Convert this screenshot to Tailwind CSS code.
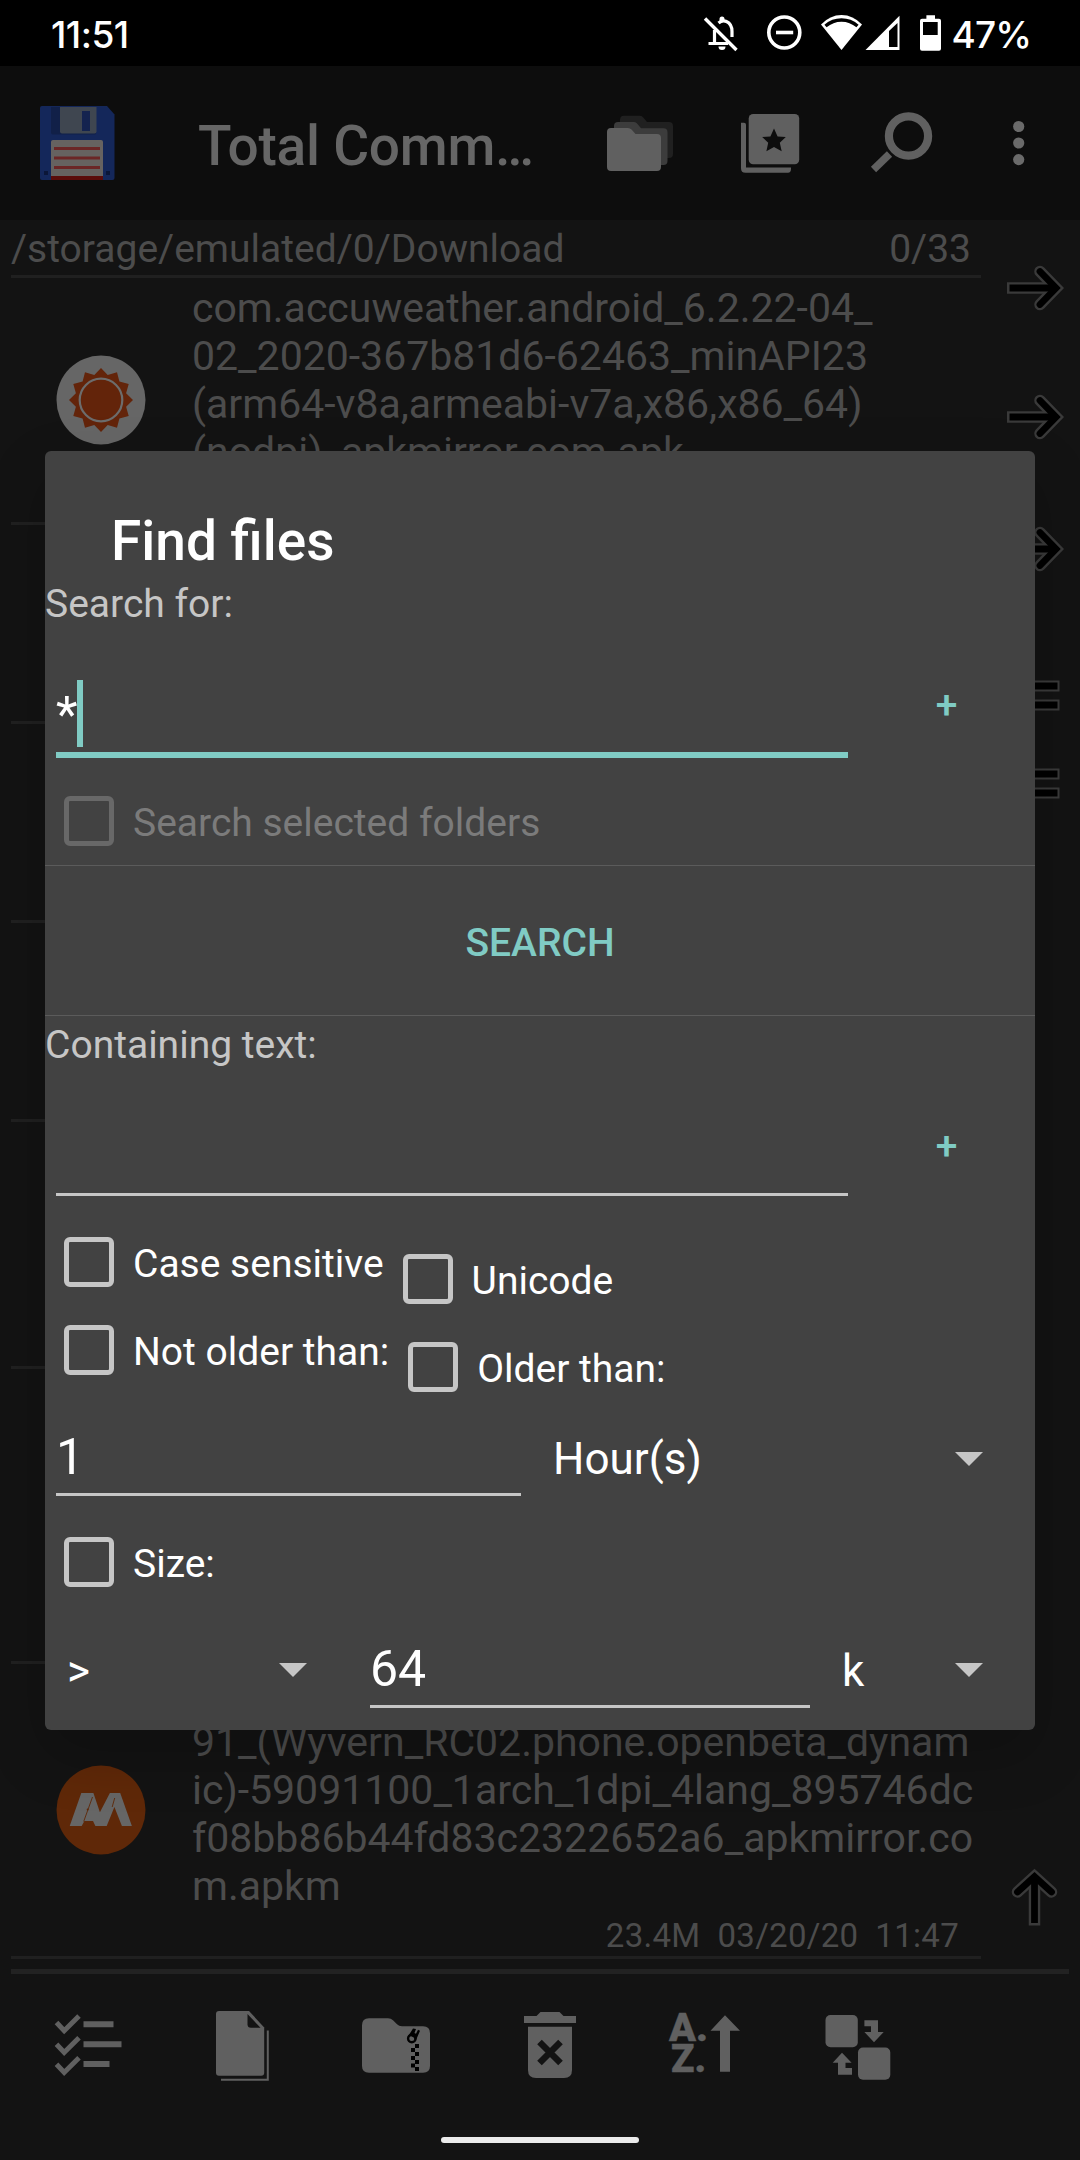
<!DOCTYPE html>
<html lang="en">
<head>
  <meta charset="UTF-8" />
  <meta name="viewport" content="width=device-width, initial-scale=1.0" />
  <title>Total Commander - Find files</title>
  <script src="https://cdn.jsdelivr.net/npm/@tailwindcss/browser@4"></script>
</head>
<body class="relative w-[1080px] h-[2160px] overflow-hidden bg-[#131313] font-['Roboto',sans-serif] text-[#4c4c4c] flex flex-col">

  <!-- Status bar -->
  <div class="h-[66px] shrink-0 bg-black text-white flex items-center pl-[51px] pr-[49px] font-['Inter','Roboto',sans-serif] font-medium text-[37px]">
    <span class="tracking-[-0.5px] pt-[3px]">11:51</span>
    <svg class="ml-auto shrink-0" width="250" height="66" viewBox="700 0 250 66" fill="none">
      <!-- bell off -->
      <path d="M714.500 43V30M718.500 23q4-3.500 8-1.500q5.500 2.500 5.500 10v5.500M708.500 43.500H728" stroke="#fff" stroke-width="3.200"/>
      <path d="M719.500 21v-2a2.500 2.500 0 0 1 5 0V21z" fill="#fff"/>
      <path d="M718.500 46.500h7a3.500 3.500 0 0 1-7 0z" fill="#fff"/>
      <path d="M705 18.500L736.500 50" stroke="#fff" stroke-width="3.400"/>
      <!-- do not disturb -->
      <circle cx="784.300" cy="32.500" r="15.500" stroke="#fff" stroke-width="3.600"/>
      <path d="M776 32.500h17.200" stroke="#fff" stroke-width="3.600"/>
      <!-- wifi -->
      <path d="M841.500 50L821 24.500Q830 15 841.500 15T862 24.500Z" fill="#fff"/>
      <path d="M825.500 26q7-6 16-6t16 6" stroke="#000" stroke-width="3.400"/>
      <!-- signal -->
      <path d="M865.500 50L899.500 15.700V50z" fill="#fff"/>
      <path d="M889 31L897.500 23V47H889z" fill="#000"/>
      <!-- battery -->
      <path d="M926.400 15.300h8.600v3.500h4q2 0 2 2v28q0 2-2 2h-17q-2 0-2-2v-28q0-2 2-2h4.400z" fill="#fff"/>
      <path d="M923 22h14.700v13H923z" fill="#000"/>
    </svg>
    <span class="tracking-[-0.9px] pt-[3px] ml-[2px]">47%</span>
  </div>

  <!-- Toolbar -->
  <div class="h-[154px] shrink-0 bg-[#0d0d0d] flex items-center pl-[36px] text-[#606060]">
    <svg width="82" height="82" viewBox="36 102 82 82">
      <path d="M42 106h65l7.500 8.500V178q0 2-2 2H42q-2 0-2-2v-70q0-2 2-2z" fill="#14275a"/>
      <path d="M51 107h45v26q0 1.500-1.500 1.500H53q-2 0-2-2z" fill="#112048"/>
      <path d="M60 107h36.500v24.500q0 2-2 2H62q-2 0-2-2z" fill="#3f4650"/>
      <rect x="82" y="111" width="8" height="20" fill="#14234f"/>
      <path d="M53 140h48q2 0 2 2v34H51v-34q0-2 2-2z" fill="#666260"/>
      <path d="M54 148.500h46M54 158h46M54 167.500h46" stroke="#6b2626" stroke-width="2.800"/>
      <rect x="51" y="176" width="52" height="4" fill="#5a0c0a"/>
      <rect x="44" y="171" width="4" height="4" fill="#0b1638"/>
      <rect x="106" y="171" width="4" height="4" fill="#0b1638"/>
    </svg>
    <h1 class="ml-[80px] w-[402px] text-[55px] leading-[64px] font-medium text-[#666666] pt-[6px] tracking-[-0.25px] whitespace-nowrap">Total Comm…</h1>
    <svg width="80" height="80" viewBox="600 103 80 80">
      <path d="M624 115.700h16q2 0 3.500 2l3.500 4.300h22q4 0 4 4v28q0 4-4 4h-45q-4 0-4-4v-34q0-4.300 4-4.300z" fill="#202020"/>
      <path d="M618 122h16q2 0 3.500 2l3.500 4.300h22.500q4 0 4 4V161q0 4-4 4H618q-4 0-4-4v-35q0-4 4-4z" fill="#3c3c3c"/>
      <path d="M611 128h17q2 0 3.500 1.500l4 4.500H657q4 0 4 4v29q0 4-4 4h-46q-4 0-4-4v-35q0-4 4-4z" fill="currentColor"/>
    </svg>
    <svg class="ml-[55px]" width="70" height="80" viewBox="735 103 70 80">
      <path d="M741 122.700h3q2 0 2 2V167.500H791v1.200q0 4-3 4H745.500q-4.500 0-4.500-4.500z" fill="currentColor"/>
      <rect x="748.700" y="114" width="50.500" height="50.300" rx="4.500" fill="currentColor"/>
      <path d="M774 128.500l3.600 7.900 8.200.6-6 5.700 1.900 8.600-7.700-4.200-7.600 4.200 1.800-8.600-6-5.700 8.200-.6z" fill="#0d0d0d"/>
    </svg>
    <svg class="ml-[62px]" width="70" height="80" viewBox="868 103 70 80" fill="none" stroke="currentColor">
      <circle cx="909.500" cy="136" r="19.600" stroke-width="8.200"/>
      <path d="M890.500 154L874.500 169.500" stroke-width="7.500"/>
    </svg>
    <svg class="ml-[73px]" width="18" height="60" viewBox="1010 113 18 60" fill="#6a6a6a">
      <circle cx="1018.700" cy="126.500" r="5.600"/><circle cx="1018.700" cy="143" r="5.600"/><circle cx="1018.700" cy="159.600" r="5.600"/>
    </svg>
  </div>

  <!-- File panel -->
  <div class="h-[1739px] shrink-0 flex pl-[11px]">
    <div class="w-[970px] shrink-0 flex flex-col">
      <div class="h-[58px] shrink-0 border-b-[3px] border-[#202020] flex justify-between items-center pt-[3px] pr-[10px] text-[39px]">
        <span>/storage/emulated/0/Download</span>
        <span>0/33</span>
      </div>
      <div class="h-[247px] shrink-0 border-b-[3px] border-[#202020] flex overflow-hidden">
        <svg class="self-center ml-[45px] shrink-0" width="90" height="90" viewBox="-45 -45 90 90">
          <circle r="44.500" fill="#666666"/>
          <polygon fill="#63240a" points="32,0 25.100,6.700 27.700,16 18.400,18.400 16,27.700 6.700,25.100 0,32 -6.700,25.100 -16,27.700 -18.400,18.400 -27.700,16 -25.100,6.700 -32,0 -25.100,-6.700 -27.700,-16 -18.400,-18.400 -16,-27.700 -6.700,-25.100 0,-32 6.700,-25.100 16,-27.700 18.400,-18.400 27.700,-16 25.100,-6.700"/>
          <circle r="21.300" fill="none" stroke="#6c6c6c" stroke-width="2.200"/>
        </svg>
        <div class="ml-[46px] pt-[6px] text-[41px] leading-[48px] whitespace-nowrap">
          com.accuweather.android_6.2.22-04_<br>02_2020-367b81d6-62463_minAPI23<br>(arm64-v8a,armeabi-v7a,x86,x86_64)<br>(nodpi)_apkmirror.com.apk
        </div>
      </div>
      <div class="h-[199px] shrink-0 border-b-[3px] border-[#202020]"></div>
      <div class="h-[199px] shrink-0 border-b-[3px] border-[#202020]"></div>
      <div class="h-[199px] shrink-0 border-b-[3px] border-[#202020]"></div>
      <div class="h-[247px] shrink-0 border-b-[3px] border-[#202020]"></div>
      <div class="h-[295px] shrink-0 border-b-[3px] border-[#202020]"></div>
      <div class="h-[295px] shrink-0 border-b-[3px] border-[#202020] flex">
        <svg class="self-center ml-[45px] shrink-0" width="90" height="90" viewBox="56.300 1765 90 90">
          <circle cx="101.300" cy="1810" r="44.500" fill="#5f2808"/>
          <path d="M70 1826L81.600 1793H93.700L100.200 1812.300L110.200 1793H120.500L132.200 1826H122.200L114.700 1807L107 1826H95.700L93.300 1821H84.700L82 1826Z" fill="#666666"/>
          <path d="M84 1821.500L92.800 1797M112.500 1807L115 1798" stroke="#5f2808" stroke-width="0.900" fill="none"/>
          <circle cx="88" cy="1809.500" r="1" fill="#5f2808"/>
        </svg>
        <div class="ml-[46px] pt-[54px] flex-1 whitespace-nowrap">
          <div class="text-[41px] leading-[48px]">91_(Wyvern_RC02.phone.openbeta_dynam<br>ic)-59091100_1arch_1dpi_4lang_895746dc<br>f08bb86b44fd83c2322652a6_apkmirror.co<br>m.apkm</div>
          <div class="text-[33px] leading-[52px] tracking-[0.3px] text-right pr-[22px] whitespace-pre">23.4M  03/20/20  11:47</div>
        </div>
      </div>
    </div>

    <!-- Side buttons -->
    <div class="flex-1 pl-[22px] flex flex-col items-start pt-[42px]">
      <svg class="shrink-0" width="64" height="52" viewBox="1003 262 64 52" fill="none">
        <g stroke="#3a3a3a" stroke-width="11.500"><path d="M1007 288H1054"/><path d="M1040 271.500L1056 288L1040 304.500" stroke-linecap="round"/></g>
        <g stroke="#000" stroke-width="6.800"><path d="M1009.500 288H1054"/><path d="M1040 271.500L1056 288L1040 304.500" stroke-linecap="round"/></g>
      </svg>
      <svg class="shrink-0 mt-[77px]" width="64" height="52" viewBox="1003 262 64 52" fill="none">
        <g stroke="#3a3a3a" stroke-width="11.500"><path d="M1007 288H1054"/><path d="M1040 271.500L1056 288L1040 304.500" stroke-linecap="round"/></g>
        <g stroke="#000" stroke-width="6.800"><path d="M1009.500 288H1054"/><path d="M1040 271.500L1056 288L1040 304.500" stroke-linecap="round"/></g>
      </svg>
      <svg class="shrink-0 mt-[80px]" width="64" height="52" viewBox="1003 262 64 52" fill="none">
        <g stroke="#3a3a3a" stroke-width="11.500"><path d="M1007 288H1054"/><path d="M1040 271.500L1056 288L1040 304.500" stroke-linecap="round"/></g>
        <g stroke="#000" stroke-width="6.800"><path d="M1009.500 288H1054"/><path d="M1040 271.500L1056 288L1040 304.500" stroke-linecap="round"/></g>
      </svg>
      <svg class="shrink-0 mt-[101px]" width="64" height="39" viewBox="1003 676 64 39" fill="#000" stroke="#3a3a3a" stroke-width="2">
        <rect x="1009" y="681.500" width="49.500" height="9"/><rect x="1009" y="700.500" width="49.500" height="9"/>
      </svg>
      <svg class="shrink-0 mt-[49px]" width="64" height="39" viewBox="1003 676 64 39" fill="#000" stroke="#3a3a3a" stroke-width="2">
        <rect x="1009" y="681.500" width="49.500" height="9"/><rect x="1009" y="700.500" width="49.500" height="9"/>
      </svg>
      <svg class="shrink-0 mt-[1062px]" width="64" height="65" viewBox="1003 1865 64 65" fill="none">
        <g stroke="#3a3a3a" stroke-width="11.500"><path d="M1034.500 1925.500V1878"/><path d="M1017.500 1892L1034.500 1876.500L1051.500 1892" stroke-linecap="round"/></g>
        <g stroke="#000" stroke-width="6.800"><path d="M1034.500 1923V1878"/><path d="M1017.500 1892L1034.500 1876.500L1051.500 1892" stroke-linecap="round"/></g>
      </svg>
    </div>
  </div>

  <!-- Button bar -->
  <div class="mx-[11px] mt-[10px] h-[5px] shrink-0 bg-[#222222]"></div>
  <div class="mt-[34px] h-[76px] shrink-0 flex pl-[50px] text-[#606060]">
    <svg width="76" height="76" viewBox="50 2008 76 76" fill="none" stroke="currentColor">
      <path d="M56.500 2022.500l7.700 8.200L79 2016M56.500 2044.200l7.700 8.200L79 2037.700M56.500 2064.200l7.700 8.200L79 2057.700" stroke-width="5"/>
      <path d="M83.500 2024.300h30M83.500 2044.200h38M83.500 2064h26" stroke-width="6"/>
    </svg>
    <svg class="ml-[85px]" width="62" height="76" viewBox="211 2008 62 76">
      <path d="M219 2011H249L264.200 2027.500V2072.700q0 3-3 3H219q-3 0-3-3V2014q0-3 3-3z" fill="currentColor"/>
      <path d="M247.500 2014L260.500 2027.800H251q-3.500 0-3.500-3.500z" fill="#131313"/>
      <path d="M267.800 2030.500V2079.700H221" fill="none" stroke="currentColor" stroke-width="2"/>
    </svg>
    <svg class="ml-[84px]" width="78" height="76" viewBox="357 2008 78 76">
      <path d="M369 2018.300H388q3 0 5 2l4 4q2 2 5 2H423q7 0 7 7V2066q0 6.700-7 6.700H369q-7 0-7-6.700V2025.300q0-7 7-7z" fill="currentColor"/>
      <circle cx="411.800" cy="2038.500" r="3.700" fill="none" stroke="#000" stroke-width="2.400"/>
      <path d="M408 2036.500L413 2028.500l3 .5-1.500 4 1.500.8 2-4 2 1-4.500 10.500-1.500-3.500q-3-2.500-6-1.300z" fill="#000"/>
      <path d="M415 2044h4v4H415zM411 2048h4v4h-4zM415 2052h4v4H415zM411 2056h4v4h-4zM415 2060h4v4H415zM411 2063.500h4v4h-4zM415 2067h4v4H415z" fill="#000"/>
    </svg>
    <svg class="ml-[85px]" width="60" height="76" viewBox="520 2008 60 76" fill="currentColor">
      <path d="M524 2016H536.500l4-4H559.500l4 4H576V2023H524z"/>
      <path d="M528 2026.700H572V2070q0 8-8 8H536q-8 0-8-8z"/>
      <path d="M539.500 2042L560.500 2063M560.500 2042L539.500 2063" stroke="#131313" stroke-width="6.500"/>
    </svg>
    <svg class="ml-[85px] overflow-visible" width="79" height="76" viewBox="665 2008 79 76" fill="currentColor">
      <g font-family="Roboto" font-weight="900" font-size="38" stroke="currentColor" stroke-width="0.400">
        <text x="669" y="2041" textLength="39" lengthAdjust="spacingAndGlyphs">A.</text>
        <text x="671" y="2071.700" textLength="35" lengthAdjust="spacingAndGlyphs">Z.</text>
      </g>
      <path d="M725 2015.300L740 2030.700H730V2071.700H720V2030.700H710.500z"/>
    </svg>
    <svg class="ml-[77px]" width="73" height="76" viewBox="821 2008 73 76" fill="currentColor">
      <rect x="825.500" y="2015" width="32.300" height="32.300" rx="5"/>
      <rect x="858" y="2047.500" width="32.300" height="32.300" rx="5"/>
      <path d="M864.400 2020.300H878V2032H883.700L874 2042.300L864.400 2032H871V2026.300H864.400z"/>
      <path d="M842 2052.700L851.600 2062.700H845.500V2068H852V2074.700H838V2062.700H832.700z"/>
    </svg>
  </div>
  <div class="mt-[53px] mx-auto w-[198px] h-[6px] shrink-0 rounded-full bg-[#ebebeb]"></div>

  <!-- Find files dialog -->
  <div class="absolute left-[45px] top-[451px] w-[990px] h-[1279px] rounded-[6px] bg-[#424242] overflow-hidden shadow-[0_24px_60px_rgba(0,0,0,0.2)] text-white text-[39px] leading-[47px] flex flex-col">
    <h2 class="h-[130px] shrink-0 pl-[66px] pt-[58px] text-[55px] leading-[64px] font-medium">Find files</h2>
    <div class="h-[45px] shrink-0 text-[#c6c6c6]">Search for:</div>
    <div class="h-[151px] shrink-0 flex pl-[11px]">
      <div class="w-[792px] h-[132px] border-b-[6px] border-[#80cbc4] flex pt-[54px] text-[50px] leading-[70px]">
        <span class="w-[21px]">*</span><span class="w-[6px] h-[67px] bg-[#80cbc4]"></span>
      </div>
      <button class="flex-1 h-[158px] pl-[10px] text-[#80cbc4] font-medium">+</button>
    </div>
    <label class="h-[88px] shrink-0 flex items-center pl-[19px] text-[#7b7b7b]">
      <span class="size-[50px] border-[5.5px] border-[#686868] rounded-[6px]"></span>
      <span class="ml-[19px] pt-[5px]">Search selected folders</span>
    </label>
    <button class="h-[151px] shrink-0 border-y border-[#5b5b5b] pt-[6px] text-[#80cbc4] font-medium">SEARCH</button>
    <div class="h-[51px] shrink-0 pt-[6px] text-[#c6c6c6]">Containing text:</div>
    <div class="h-[151px] shrink-0 flex pl-[11px]">
      <div class="w-[792px] h-[129px] border-b-[3px] border-[#c6c6c6]"></div>
      <button class="flex-1 h-[158px] pl-[10px] text-[#80cbc4] font-medium">+</button>
    </div>
    <div class="h-[88px] shrink-0 flex items-start">
      <label class="h-[88px] flex items-center pl-[19px]">
        <span class="size-[50px] border-[5.5px] border-[#c6c6c6] rounded-[6px]"></span>
        <span class="ml-[19px] pt-[5px]">Case sensitive</span>
      </label>
      <label class="h-[88px] mt-[17px] flex items-center pl-[19px]">
        <span class="size-[50px] border-[5.5px] border-[#c6c6c6] rounded-[6px]"></span>
        <span class="ml-[19px] pt-[5px]">Unicode</span>
      </label>
    </div>
    <div class="h-[88px] shrink-0 flex items-start">
      <label class="h-[88px] flex items-center pl-[19px]">
        <span class="size-[50px] border-[5.5px] border-[#c6c6c6] rounded-[6px]"></span>
        <span class="ml-[19px] pt-[5px]">Not older than:</span>
      </label>
      <label class="h-[88px] mt-[17px] flex items-center pl-[19px]">
        <span class="size-[50px] border-[5.5px] border-[#c6c6c6] rounded-[6px]"></span>
        <span class="ml-[19px] pt-[5px]">Older than:</span>
      </label>
    </div>
    <div class="h-[124px] shrink-0 flex pl-[11px] pr-[52px]">
      <div class="w-[465px] h-[102px] border-b-[3px] border-[#c6c6c6] pt-[34px] text-[50px] leading-[58px]">1</div>
      <div class="flex-1 h-[130px] flex items-center justify-between pl-[32px] text-[44px] leading-[45px]">
        <span>Hour(s)</span>
        <svg width="28" height="14" viewBox="0 0 28 14" fill="#c6c6c6"><path d="M0 0h28L14 14z"/></svg>
      </div>
    </div>
    <label class="h-[88px] shrink-0 flex items-center pl-[19px]">
      <span class="size-[50px] border-[5.5px] border-[#c6c6c6] rounded-[6px]"></span>
      <span class="ml-[19px] pt-[5px]">Size:</span>
    </label>
    <div class="h-[123px] shrink-0 flex pl-[22px] pr-[52px]">
      <div class="w-[240px] h-[128px] flex items-center justify-between text-[44px] leading-[45px]">
        <span class="pt-[2px]">&gt;</span>
        <svg width="28" height="14" viewBox="0 0 28 14" fill="#c6c6c6"><path d="M0 0h28L14 14z"/></svg>
      </div>
      <div class="ml-[63px] w-[440px] h-[102px] border-b-[3px] border-[#c6c6c6] pt-[34px] text-[50px] leading-[58px]">64</div>
      <div class="flex-1 h-[128px] flex items-center justify-between pl-[32px] text-[44px] leading-[45px]">
        <span class="pt-[2px]">k</span>
        <svg width="28" height="14" viewBox="0 0 28 14" fill="#c6c6c6"><path d="M0 0h28L14 14z"/></svg>
      </div>
    </div>
  </div>
</body>
</html>
